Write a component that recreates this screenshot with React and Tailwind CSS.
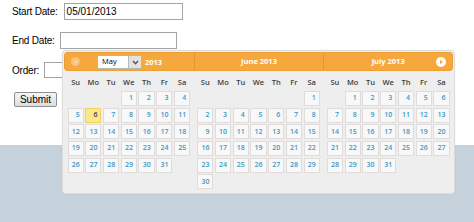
import React from "react";

const months = [
  { name: "May", start: 3, days: 31 },
  { name: "June", start: 6, days: 30 },
  { name: "July", start: 1, days: 31 },
];
const dayNames = ["Su", "Mo", "Tu", "We", "Th", "Fr", "Sa"];

function MonthGrid({ m }) {
  const cells = [];
  for (let i = 0; i < m.start; i++) cells.push(null);
  for (let d = 1; d <= m.days; d++) cells.push(d);
  return (
    <div className="grid grid-cols-7 gap-x-[1.5px] gap-y-[1.7px] px-[3.5px]">
      {dayNames.map((n) => (
        <div
          key={n}
          className="h-[20px] -mb-[1.7px] pt-[3px] flex items-center justify-center text-[7.5px] font-semibold text-[#3c3c3c]"
        >
          {n}
        </div>
      ))}
      {cells.map((d, i) => {
        if (d === null) return <div key={i} className="h-[15px]" />;
        const hl = m.name === "May" && d === 6;
        return (
          <div
            key={i}
            className={
              "h-[15px] flex items-center justify-end pr-[3px] text-[7px] font-semibold border " +
              (hl
                ? "bg-[#fce78c] border-[#f1d35c] text-[#3a3a3a]"
                : "bg-[#f8f8f8] border-[#e0dcdc] text-[#4199c6]")
            }
          >
            {d}
          </div>
        );
      })}
    </div>
  );
}

export default function App() {
  return (
    <div
      className="relative w-[474px] h-[222px] flex flex-col bg-white overflow-hidden"
      style={{ fontFamily: '"Liberation Sans", Arial, sans-serif' }}
    >
      <div className="h-[145px] pl-[12px] flex flex-col text-[10px] tracking-[-0.2px] text-black">
        <div className="mt-[3px] h-[17px] flex items-center gap-[6px]">
          <span>Start Date:</span>
          <div className="w-[119px] h-[17px] border border-[#a5a5a5] flex items-center pl-[2px] tracking-normal">
            05/01/2013
          </div>
        </div>
        <div className="mt-[12px] h-[17px] flex items-center gap-[5px]">
          <span>End Date:</span>
          <div className="w-[117px] h-[17px] border border-[#a5a5a5]" />
        </div>
        <div className="mt-[13px] h-[16px] flex items-center gap-[5px]">
          <span>Order:</span>
          <div className="w-[117px] h-[16px] border border-[#a5a5a5]" />
        </div>
        <div className="mt-[14px] ml-[2px] w-[43px] h-[15px] border border-[#8e8e8e] rounded-[2px] bg-gradient-to-b from-[#f6f6f6] to-[#dcdcdc] flex items-center justify-center tracking-normal">
          Submit
        </div>
      </div>
      <div className="flex-1 bg-[#c6d2db]" />

      <div
        className="absolute left-[62px] top-[50px] w-[393px] bg-[#eeeeee] border border-[#dddddd] rounded-[4px] p-[1px] pb-[4px] shadow-[0_0_2px_rgba(0,0,0,0.08)]"
        style={{ fontFamily: '"Open Sans", "DejaVu Sans", sans-serif' }}
      >
        <div className="grid grid-cols-3">
          {months.map((m, idx) => (
            <div key={m.name}>
              <div
                className={
                  "relative h-[19px] bg-[#f6a83d] border-y border-[#eb9f35] flex items-center justify-center text-white text-[7.5px] font-bold " +
                  (idx === 0
                    ? "rounded-l-[4px] border-l"
                    : idx === 2
                    ? "rounded-r-[4px] border-r border-l border-l-[#e3962c]"
                    : "border-l border-l-[#e3962c]")
                }
              >
                {idx === 0 ? (
                  <>
                    <div className="absolute left-[6px] top-[4px] w-[9px] h-[9px] rounded-full bg-[#f9c27e] flex items-center justify-center">
                      <div className="w-0 h-0 border-y-[2px] border-y-transparent border-r-[3px] border-r-[#fbd7a6]" />
                    </div>
                    <div className="absolute left-[32px] top-[2px] w-[45px] h-[14px] bg-white border border-[#b5b5b5] flex items-center">
                      <span className="pl-[4px] text-black font-normal text-[7.5px] flex-1">May</span>
                      <div className="w-[13px] h-full bg-[#e2e2e2] border-l border-[#b9b9b9] flex items-center justify-center">
                        <svg width="7" height="5" viewBox="0 0 7 5">
                          <path d="M1 1 L3.5 3.7 L6 1" fill="none" stroke="#555" strokeWidth="1.4" />
                        </svg>
                      </div>
                    </div>
                    <span className="absolute left-[80px] top-[4px] leading-[10px]">2013</span>
                  </>
                ) : (
                  <span>{m.name} 2013</span>
                )}
                {idx === 2 && (
                  <div className="absolute right-[6px] top-[4px] w-[10px] h-[10px] rounded-full bg-white flex items-center justify-center">
                    <div className="ml-[1px] w-0 h-0 border-y-[2.5px] border-y-transparent border-l-[3.5px] border-l-[#f0a040]" />
                  </div>
                )}
              </div>
              <MonthGrid m={m} />
            </div>
          ))}
        </div>
      </div>
    </div>
  );
}
